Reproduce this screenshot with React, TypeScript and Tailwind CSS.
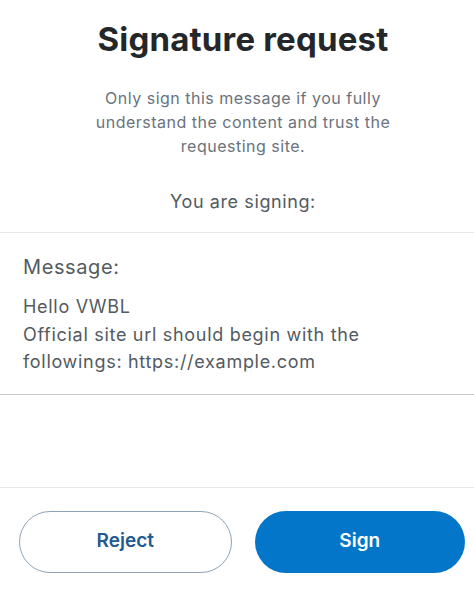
import React from "react";

export default function App() {
  return (
    <div
      className="w-[474px] h-[589px] bg-white flex flex-col overflow-hidden"
      style={{ fontFamily: "Inter, 'Liberation Sans', sans-serif" }}
    >
      <div className="flex flex-col items-center pt-[18px] pl-[12px]">
        <h1 className="text-[33px] leading-[42px] font-bold text-[#24272a] tracking-[0.2px]">
          Signature request
        </h1>
        <p className="mt-[26px] w-[320px] text-center text-[16px] leading-[24px] tracking-[0.5px] text-[#6a737d]">
          Only sign this message if you fully understand the content and trust the requesting site.
        </p>
        <p className="mt-[32px] text-[18px] leading-[24px] tracking-[0.6px] text-[#535a61]">You are signing:</p>
      </div>
      <div className="mt-[18px] border-t border-[#e8e8e8]" />
      <div className="px-[23px] pt-[21px] pb-[18px] border-b border-[#c8c8c8]">
        <div className="text-[20px] leading-[26px] tracking-[0.6px] text-[#535a61]">Message:</div>
        <div className="mt-[13px] text-[18px] leading-[27.5px] tracking-[0.7px] text-[#535a61]">
          <div>Hello VWBL</div>
          <div>Official site url should begin with the</div>
          <div>followings: https://example.com</div>
        </div>
      </div>
      <div className="h-[92px]" />
      <div className="border-t border-[#e8e8e8] flex gap-[23px] pl-[19px] pr-[9px] pt-[23px]">
        <button className="flex-1 h-[62px] rounded-full border border-[#8fa3b8] bg-white text-[#245a8f] text-[19px] font-semibold">
          Reject
        </button>
        <button className="flex-1 h-[62px] rounded-full bg-[#0376c9] text-white text-[19px] font-semibold">
          Sign
        </button>
      </div>
    </div>
  );
}
